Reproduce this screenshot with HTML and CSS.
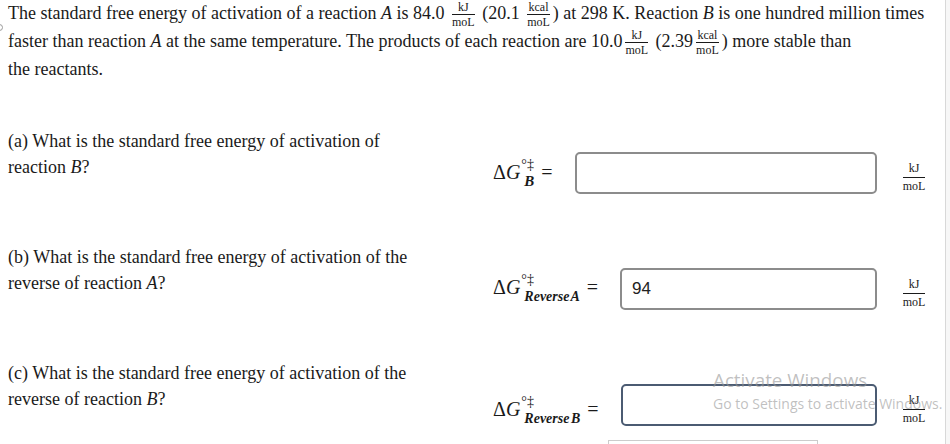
FILE: index.html
```html
<!DOCTYPE html>
<html>
<head>
<meta charset="utf-8">
<link rel="stylesheet" href="styles.css">
</head>
<body>
<div class="page">
  <div class="main">
    <span class="edge-mark"></span>
    <p class="intro">The standard free energy of activation of a reaction <i>A</i> is 84.0 <span class="frac"><span class="num">kJ</span><span class="den">moL</span></span> (20.1 <span class="frac"><span class="num">kcal</span><span class="den">moL</span></span>) at 298 K. Reaction <i>B</i> is one hundred million times faster than reaction <i>A</i> at the same temperature. The products of each reaction are 10.0<span class="frac"><span class="num">kJ</span><span class="den">moL</span></span> (2.39<span class="frac"><span class="num">kcal</span><span class="den">moL</span></span>) more stable than<br>the reactants.</p>

    <div class="rows">
      <div class="row">
        <div class="q">(a) What is the standard free energy of activation of reaction <i>B</i>?</div>
        <div class="ans ans-a">
          <span class="label">Δ<i>G</i><span class="subsup"><span class="sup">°‡</span><span class="sub"><b><i>B</i></b></span></span><span class="eq">=</span></span>
          <div class="field"></div>
          <span class="frac unit"><span class="num">kJ</span><span class="den">moL</span></span>
        </div>
      </div>
      <div class="row">
        <div class="q">(b) What is the standard free energy of activation of the reverse of reaction <i>A</i>?</div>
        <div class="ans ans-b">
          <span class="label">Δ<i>G</i><span class="subsup"><span class="sup">°‡</span><span class="sub"><b><i>Reverse A</i></b></span></span><span class="eq">=</span></span>
          <div class="field">94</div>
          <span class="frac unit"><span class="num">kJ</span><span class="den">moL</span></span>
        </div>
      </div>
      <div class="row">
        <div class="q">(c) What is the standard free energy of activation of the reverse of reaction <i>B</i>?</div>
        <div class="ans ans-c">
          <span class="label">Δ<i>G</i><span class="subsup"><span class="sup">°‡</span><span class="sub"><b><i>Reverse B</i></b></span></span><span class="eq">=</span></span>
          <div class="field field-focus"></div>
          <span class="frac unit"><span class="num">kJ</span><span class="den">moL</span></span>
        </div>
      </div>
    </div>
    <div class="next-box"></div>
    <div class="watermark">
      <div class="wm-title">Activate Windows</div>
      <div class="wm-sub">Go to Settings to activate Windows.</div>
    </div>
  </div>
  <div class="scrollstrip"></div>
</div>
</body>
</html>
```

FILE: styles.css
```css
html, body {
  margin: 0;
  padding: 0;
  overflow: hidden;
  background: #ffffff;
}
body {
  font-family: "Liberation Serif", "Times New Roman", serif;
  font-size: 18px;
  color: #1a1a1a;
}
.page {
  display: flex;
  width: 950px;
  height: 444px;
}
.main {
  position: relative;
  flex: 1;
  padding: 0 8px;
  overflow: hidden;
}
.scrollstrip {
  width: 4px;
  border-left: 1px solid #d8d8d8;
  background: #f7f7f7;
}
.edge-mark {
  position: absolute;
  left: -4px;
  top: 24px;
  width: 5px;
  height: 5px;
  border: 1px solid #9a9a9a;
  border-radius: 50%;
}
.intro {
  margin: 0;
  line-height: 26.3px;
}
.frac {
  display: inline-flex;
  flex-direction: column;
  align-items: center;
  font-size: 12px;
  line-height: 11px;
  vertical-align: 8px;
  margin: 0 3px;
}
.frac .num {
  padding: 0 1px 1px;
  border-bottom: 1px solid #1a1a1a;
  align-self: stretch;
  text-align: center;
}
.frac .den {
  padding-top: 2px;
}
.rows {
  display: flex;
  flex-direction: column;
  gap: 51px;
  margin-top: 47px;
}
.row {
  display: flex;
  align-items: flex-start;
}
.q {
  width: 420px;
  line-height: 25.5px;
}
.ans {
  flex: 1;
  display: flex;
  align-items: center;
  margin-left: 65px;
  margin-top: 23px;
  padding-right: 12px;
}
.label {
  display: inline-flex;
  align-items: baseline;
  font-size: 20px;
  white-space: nowrap;
  position: relative;
}
.ans-a .label { top: 3px; }
.ans-b .label { top: 2px; }
.ans-c .label { top: 8px; }
.subsup {
  display: inline-flex;
  flex-direction: column;
  font-size: 14px;
  line-height: 11px;
  margin-left: 1px;
  position: relative;
  top: -5px;
}
.sup {
  font-size: 14px;
  position: relative;
  top: -5px;
}
.sub {
  padding-left: 3px;
  word-spacing: -2px;
  position: relative;
  top: 1px;
}
.ans-a .sub { font-size: 15px; padding-left: 3px; }
.eq {
  margin-left: 7px;
  font-size: 20px;
}
.field {
  flex: 1;
  margin-left: 22px;
  height: 38px;
  border: 2px solid #8c8c8c;
  border-radius: 5px;
  box-sizing: content-box;
  font-family: "Liberation Sans", Arial, sans-serif;
  font-size: 17px;
  color: #222;
  padding-left: 10px;
  display: flex;
  align-items: center;
}
.field-focus {
  border-color: #4b5b72;
}
.unit {
  margin: 0 0 0 26px;
  width: 22px;
  vertical-align: baseline;
  position: relative;
  top: 4px;
}
.unit .num {
  padding-bottom: 3px;
}
.unit .den {
  padding-top: 3px;
}
.next-box {
  margin: 14px 0 0 600px;
  width: 208px;
  height: 30px;
  border: 1px solid #cccccc;
}
.watermark {
  position: absolute;
  left: 713px;
  top: 368px;
  font-family: "Open Sans", "Noto Sans", sans-serif;
  color: rgba(150, 150, 150, 0.6);
  white-space: nowrap;
  pointer-events: none;
}
.wm-title {
  font-size: 18.8px;
  line-height: 24px;
}
.wm-sub {
  font-size: 14px;
  line-height: 18px;
  margin-top: 3px;
}
```
